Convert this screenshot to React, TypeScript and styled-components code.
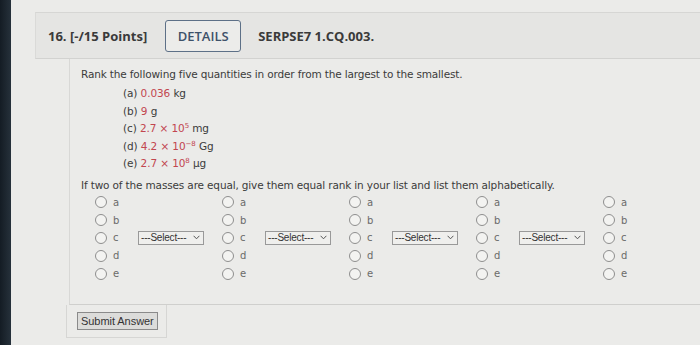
import styled, { createGlobalStyle } from 'styled-components'

const GlobalStyle = createGlobalStyle`
  html, body { margin: 0; padding: 0; }
  body { background: #eaeae8; }
`

const Screen = styled.div`
  width: 700px;
  height: 345px;
  overflow: hidden;
  display: flex;
  background: #ebebe9;
  font-family: "DejaVu Sans", Verdana, sans-serif;
  color: #3b3b3b;
`

const Bezel = styled.div`
  width: 11px;
  flex-shrink: 0;
  background: linear-gradient(90deg, #141c24, #26313b);
`

const Page = styled.div`
  flex: 1;
  padding: 12px 0 0 24px;
  display: flex;
  flex-direction: column;
`

const Header = styled.div`
  height: 45px;
  display: flex;
  align-items: center;
  padding-left: 12px;
  background: #e5e5e3;
  border-top: 1px solid #d6d6d4;
  border-bottom: 1px solid #d2d2d0;
  border-left: 1px solid #dadad8;
  font-family: "Open Sans", sans-serif;
  font-weight: 700;
  font-size: 13px;
  color: #3a3a3a;
`

const Points = styled.span`
  margin-right: 18px;
`

const DetailsButton = styled.span`
  width: 74px;
  height: 30px;
  display: flex;
  align-items: center;
  justify-content: center;
  border: 1.5px solid #5d7087;
  border-radius: 3px;
  background: #ececea;
  color: #3e5169;
  font-weight: 600;
  margin-right: 17px;
`

const Body = styled.div`
  margin-left: 34px;
  border-left: 1px solid #d8d8d6;
  border-bottom: 1px solid #cfcfcd;
  padding: 8px 0 0 11px;
  height: 246px;
  box-sizing: border-box;
  font-size: 10.5px;
`

const Paragraph = styled.div`
  line-height: 14px;
  letter-spacing: -0.15px;
`

const Parts = styled.div`
  padding: 4px 0 5px 42px;
  display: flex;
  flex-direction: column;
`

const Part = styled.div`
  line-height: 17.6px;
  letter-spacing: -0.1px;
`

const Red = styled.span`
  color: #c2464f;
`

const Sup = styled.sup`
  font-size: 7px;
  vertical-align: 4px;
  line-height: 0;
`

const Choices = styled.div`
  display: flex;
  align-items: center;
  padding: 0 0 0 14px;
  margin-top: 1.5px;
`

const RadioGroup = styled.div`
  width: 43px;
  display: flex;
  flex-direction: column;
`

const RadioRow = styled.label`
  height: 17.8px;
  display: flex;
  align-items: center;
  color: #6a6a6a;
  font-size: 10px;
`

const Circle = styled.span`
  width: 10px;
  height: 10px;
  border: 1px solid #8e8e8e;
  border-radius: 50%;
  background: #f3f3f1;
  margin-right: 6px;
`

const Select = styled.div`
  width: 66px;
  height: 14px;
  margin-right: 18px;
  border: 1px solid #999;
  background: #efefed;
  display: flex;
  align-items: center;
  justify-content: space-between;
  padding: 0 3px 0 2px;
  box-sizing: border-box;
  font-family: "Liberation Sans", Arial, sans-serif;
  font-size: 10px;
  color: #333;
  letter-spacing: -0.2px;
`

const Chevron = () => (
  <svg width="7" height="5" viewBox="0 0 7 5">
    <path d="M0.6 0.8 L3.5 3.8 L6.4 0.8" fill="none" stroke="#555" strokeWidth="1" />
  </svg>
)

const SubmitArea = styled.div`
  margin-left: 31px;
  width: 101px;
  height: 33px;
  border-left: 1px solid #d6d6d4;
  border-right: 1px solid #d6d6d4;
  border-bottom: 1px solid #d6d6d4;
  box-sizing: border-box;
  padding: 5px 0 0 10px;
`

const SubmitButton = styled.span`
  display: inline-flex;
  align-items: center;
  height: 16px;
  padding: 0 3px;
  border: 1px solid #8a8a8a;
  background: #dcdcda;
  font-family: "Liberation Sans", Arial, sans-serif;
  font-size: 11px;
  color: #333;
  letter-spacing: -0.05px;
`

const letters = ['a', 'b', 'c', 'd', 'e']

function Radios() {
  return (
    <RadioGroup>
      {letters.map((l) => (
        <RadioRow key={l}>
          <Circle />
          {l}
        </RadioRow>
      ))}
    </RadioGroup>
  )
}

export default function App() {
  return (
    <Screen>
      <GlobalStyle />
      <Bezel />
      <Page>
        <Header>
          <Points>16. [-/15 Points]</Points>
          <DetailsButton>DETAILS</DetailsButton>
          SERPSE7 1.CQ.003.
        </Header>
        <Body>
          <Paragraph>Rank the following five quantities in order from the largest to the smallest.</Paragraph>
          <Parts>
            <Part>(a) <Red>0.036</Red> kg</Part>
            <Part>(b) <Red>9</Red> g</Part>
            <Part>(c) <Red>2.7 × 10<Sup>5</Sup></Red> mg</Part>
            <Part>(d) <Red>4.2 × 10<Sup>−8</Sup></Red> Gg</Part>
            <Part>(e) <Red>2.7 × 10<Sup>8</Sup></Red> µg</Part>
          </Parts>
          <Paragraph>If two of the masses are equal, give them equal rank in your list and list them alphabetically.</Paragraph>
          <Choices>
            {[0, 1, 2, 3].map((i) => (
              <>
                <Radios key={'r' + i} />
                <Select key={'s' + i}>---Select---<Chevron /></Select>
              </>
            ))}
            <Radios />
          </Choices>
        </Body>
        <SubmitArea>
          <SubmitButton>Submit Answer</SubmitButton>
        </SubmitArea>
      </Page>
    </Screen>
  )
}
